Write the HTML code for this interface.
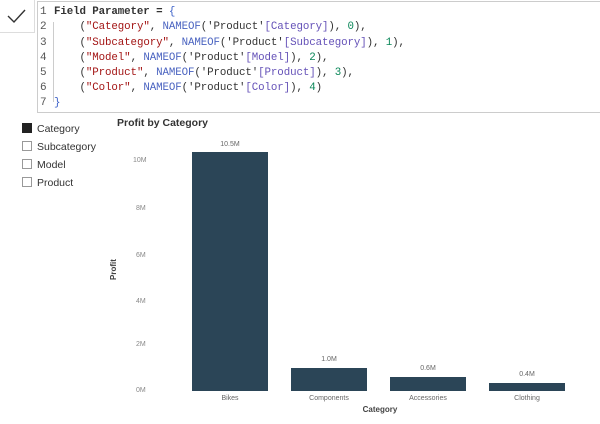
<!DOCTYPE html>
<html><head><style>
body{margin:0;width:600px;height:424px;background:#fff;position:relative;overflow:hidden;font-family:"Liberation Sans",sans-serif}
.chk{position:absolute;left:0;top:0;width:35px;height:33px;border:1px solid #ddd;border-left:none;border-top:none;box-sizing:border-box}
.ed{position:absolute;left:37px;top:1px;width:570px;height:112px;border:1px solid #ccc;box-sizing:border-box}
.ln{position:absolute;left:40px;font:11px "Liberation Mono",monospace;color:#555}
.cd{position:absolute;left:54px;font:10.8px "Liberation Mono",monospace;color:#333;white-space:pre;letter-spacing:-0.1px}
.s{color:#a31515}.f{color:#4a63c0}.c{color:#6552b8}.n{color:#098658}.b{color:#3a5fc8}
.lg{position:absolute;left:22px;font-size:10.5px;color:#333}
.lg i{display:inline-block;width:10px;height:10px;border:1px solid #999;box-sizing:border-box;vertical-align:-1px;margin-right:5px}
.ax{position:absolute;font-size:7px;color:#888}
.bar{position:absolute;background:#2b4557;width:76px;bottom:33px}
.vl{position:absolute;font-size:7px;color:#666;width:76px;text-align:center}
</style></head><body>
<div class="chk"><svg width="35" height="33"><path d="M8 16 L14 22 L25 10" stroke="#333" stroke-width="1.4" fill="none"/></svg></div>
<div class="ed"></div>
<div style="position:absolute;left:53px;top:22px;width:1px;height:80px;background:#ccc"></div>
<div class="ln" style="top:6px">1</div><div class="ln" style="top:21px">2</div><div class="ln" style="top:37px">3</div><div class="ln" style="top:52px">4</div><div class="ln" style="top:67px">5</div><div class="ln" style="top:82px">6</div><div class="ln" style="top:97px">7</div>
<div class="cd" style="top:6px;font-weight:bold">Field Parameter = <span class="b" style="font-weight:normal">{</span></div>
<div class="cd" style="top:21px">    (<span class="s">"Category"</span>, <span class="f">NAMEOF</span>('Product'<span class="c">[Category]</span>), <span class="n">0</span>),</div>
<div class="cd" style="top:37px">    (<span class="s">"Subcategory"</span>, <span class="f">NAMEOF</span>('Product'<span class="c">[Subcategory]</span>), <span class="n">1</span>),</div>
<div class="cd" style="top:52px">    (<span class="s">"Model"</span>, <span class="f">NAMEOF</span>('Product'<span class="c">[Model]</span>), <span class="n">2</span>),</div>
<div class="cd" style="top:67px">    (<span class="s">"Product"</span>, <span class="f">NAMEOF</span>('Product'<span class="c">[Product]</span>), <span class="n">3</span>),</div>
<div class="cd" style="top:82px">    (<span class="s">"Color"</span>, <span class="f">NAMEOF</span>('Product'<span class="c">[Color]</span>), <span class="n">4</span>)</div>
<div class="cd" style="top:97px"><span class="b">}</span></div>
<div class="lg" style="top:123px"><i style="background:#222;border-color:#222"></i>Category</div>
<div class="lg" style="top:141px"><i></i>Subcategory</div>
<div class="lg" style="top:159px"><i></i>Model</div>
<div class="lg" style="top:177px"><i></i>Product</div>
<div style="position:absolute;left:117px;top:117px;font-size:10.5px;font-weight:bold;color:#333">Profit by Category</div>
<div class="ax" style="left:133px;top:157px">10M</div>
<div class="ax" style="left:136px;top:205px">8M</div>
<div class="ax" style="left:136px;top:252px">6M</div>
<div class="ax" style="left:136px;top:298px">4M</div>
<div class="ax" style="left:136px;top:341px">2M</div>
<div class="ax" style="left:136px;top:387px">0M</div>
<div style="position:absolute;left:103px;top:265px;transform:rotate(-90deg);font-size:8px;font-weight:bold;color:#444">Profit</div>
<div class="bar" style="left:192px;height:239px"></div>
<div class="bar" style="left:291px;height:23px"></div>
<div class="bar" style="left:390px;height:14px"></div>
<div class="bar" style="left:489px;height:8px"></div>
<div class="vl" style="left:192px;top:141px">10.5M</div>
<div class="vl" style="left:291px;top:356px">1.0M</div>
<div class="vl" style="left:390px;top:365px">0.6M</div>
<div class="vl" style="left:489px;top:371px">0.4M</div>
<div class="vl" style="left:192px;top:395px">Bikes</div>
<div class="vl" style="left:291px;top:395px">Components</div>
<div class="vl" style="left:390px;top:395px">Accessories</div>
<div class="vl" style="left:489px;top:395px">Clothing</div>
<div style="position:absolute;left:330px;width:100px;text-align:center;top:405px;font-size:8px;font-weight:bold;color:#444">Category</div>
</body></html>
